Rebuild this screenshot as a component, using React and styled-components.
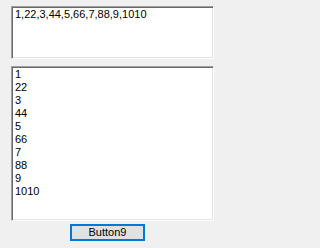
import React from "react";
import styled, { createGlobalStyle } from "styled-components";

const Global = createGlobalStyle`
  html, body { margin: 0; padding: 0; background: #f0f0f0; }
  body { font-family: "Liberation Sans", Arial, sans-serif; }
`;

const Form = styled.div`
  width: 232px;
  height: 248px;
  box-sizing: border-box;
  padding: 6px 0 0 11px;
  display: flex;
  flex-direction: column;
  background: #f0f0f0;
`;

const TextBox = styled.div`
  box-sizing: border-box;
  width: 203px;
  height: ${(p) => p.$h}px;
  background: #fff;
  border: 1px solid;
  border-color: #a0a0a0 #ffffff #ffffff #a0a0a0;
  box-shadow: inset 1px 1px 0 #696969, inset -1px -1px 0 #e3e3e3;
  padding: ${(p) => p.$pt}px 2px 0 3px;
  font-size: 11px;
  line-height: 13px;
  color: #000;
  white-space: pre;
  overflow: hidden;
  margin-bottom: ${(p) => p.$mb}px;
`;

const Line = styled.div`
  height: 13px;
`;

const Button = styled.button`
  box-sizing: border-box;
  margin-left: 59px;
  width: 75px;
  height: 17px;
  padding: 0;
  background: #e1e1e1;
  border: 2px solid #0078d7;
  font-family: "Liberation Sans", Arial, sans-serif;
  font-size: 11px;
  line-height: 13px;
  color: #000;
  display: flex;
  align-items: center;
  justify-content: center;
`;

const items = ["1", "22", "3", "44", "5", "66", "7", "88", "9", "1010"];

export default function App() {
  return (
    <>
      <Global />
      <Form>
        <TextBox $h={53} $pt={1} $mb={7}>{items.join(",")}</TextBox>
        <TextBox $h={155} $pt={1} $mb={3}>
          {items.map((t, i) => (
            <Line key={i}>{t}</Line>
          ))}
        </TextBox>
        <Button>Button9</Button>
      </Form>
    </>
  );
}
